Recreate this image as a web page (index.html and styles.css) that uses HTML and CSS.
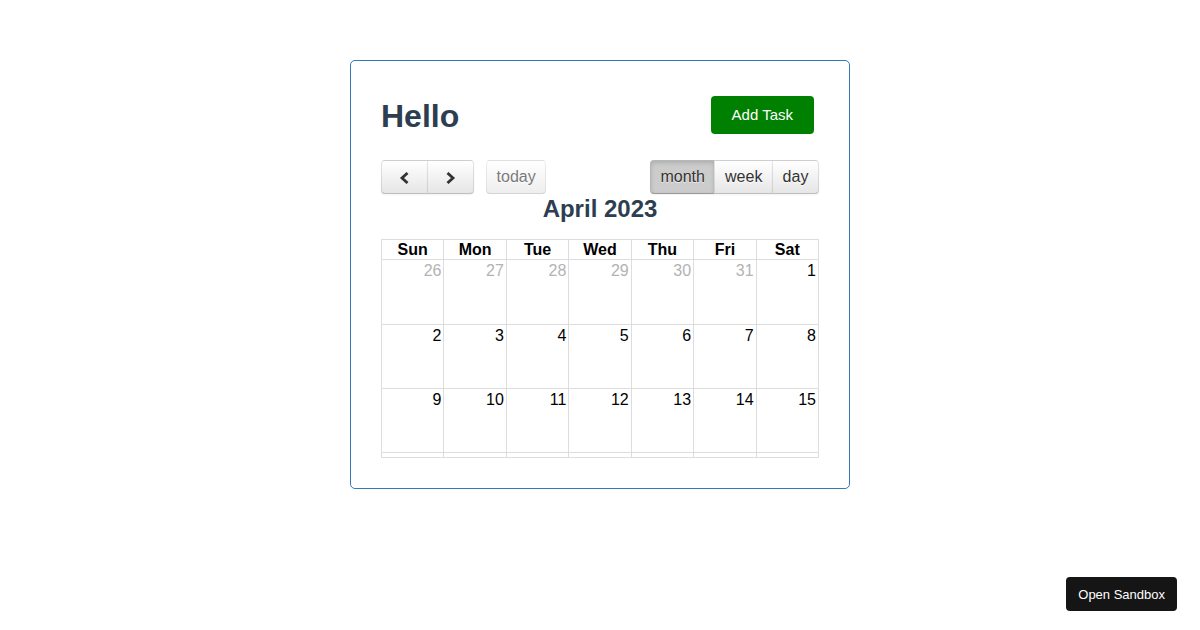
FILE: index.html
```html
<!DOCTYPE html>
<html lang="en">
  <head>
    <meta charset="UTF-8">
    <title>Hello</title>
    <link rel="stylesheet" href="styles.css">
  </head>
  <body>
    <div class="card">
      <div class="card-head">
        <h1>Hello</h1>
        <button class="add-btn">Add Task</button>
      </div>

      <div class="toolbar">
        <div class="tb-left">
          <div class="btn-group">
            <button class="fc-btn icon-btn first" aria-label="prev">
              <svg width="11" height="12" viewBox="0 0 11 12"><polyline points="8.5,1 3,6 8.5,11" fill="none" stroke="#333" stroke-width="2.8"/></svg>
            </button>
            <button class="fc-btn icon-btn last" aria-label="next">
              <svg width="11" height="12" viewBox="0 0 11 12"><polyline points="2.5,1 8,6 2.5,11" fill="none" stroke="#333" stroke-width="2.8"/></svg>
            </button>
          </div>
          <button class="fc-btn single disabled">today</button>
        </div>
        <div class="btn-group">
          <button class="fc-btn first active">month</button>
          <button class="fc-btn">week</button>
          <button class="fc-btn last">day</button>
        </div>
      </div>

      <h2 class="cal-title">April 2023</h2>

      <div class="cal-head">
        <div>Sun</div><div>Mon</div><div>Tue</div><div>Wed</div><div>Thu</div><div>Fri</div><div>Sat</div>
      </div>
      <div class="cal-body">
        <div class="day other">26</div><div class="day other">27</div><div class="day other">28</div><div class="day other">29</div><div class="day other">30</div><div class="day other">31</div><div class="day">1</div>
        <div class="day">2</div><div class="day">3</div><div class="day">4</div><div class="day">5</div><div class="day">6</div><div class="day">7</div><div class="day">8</div>
        <div class="day">9</div><div class="day">10</div><div class="day">11</div><div class="day">12</div><div class="day">13</div><div class="day">14</div><div class="day">15</div>
        <div class="day empty"></div><div class="day empty"></div><div class="day empty"></div><div class="day empty"></div><div class="day empty"></div><div class="day empty"></div><div class="day empty"></div>
      </div>
    </div>

    <button class="sandbox-btn">Open Sandbox</button>
  </body>
</html>
```

FILE: styles.css
```css
body {
  margin: 0;
  font-family: "Liberation Sans", Arial, sans-serif;
  color: #000;
  background: #fff;
}
.card {
  width: 438px;
  margin: 60px auto 0;
  padding: 30px;
  border: 1px solid #337ab7;
  border-radius: 5px;
}
.card-head {
  display: flex;
  justify-content: space-between;
  align-items: center;
  padding: 3px 5px 3px 0;
  margin-bottom: 22px;
}
.card-head h1 {
  margin: 0;
  padding-top: 4px;
  font-size: 32px;
  font-weight: bold;
  color: #2c3e50;
  line-height: 37px;
}
.add-btn {
  height: 38px;
  padding: 0 21px;
  border: 0;
  border-radius: 4px;
  background: #008000;
  color: #fff;
  font-family: inherit;
  font-size: 15px;
}
.toolbar {
  display: flex;
  justify-content: space-between;
  align-items: center;
}
.tb-left {
  display: flex;
  gap: 12px;
}
.btn-group {
  display: flex;
}
.fc-btn {
  height: 34px;
  padding: 0 9.6px;
  margin: 0;
  font-family: inherit;
  font-size: 16px;
  color: #333;
  background-color: #f5f5f5;
  background-image: linear-gradient(to bottom, #fff, #e6e6e6);
  border: 1px solid;
  border-color: rgba(0,0,0,.1) rgba(0,0,0,.1) rgba(0,0,0,.25);
  text-shadow: 0 1px 1px rgba(255,255,255,.75);
  box-shadow: inset 0 1px 0 rgba(255,255,255,.2), 0 1px 2px rgba(0,0,0,.05);
  border-radius: 0;
}
.btn-group .fc-btn + .fc-btn {
  margin-left: -1px;
}
.fc-btn.first {
  border-radius: 4px 0 0 4px;
}
.fc-btn.last {
  border-radius: 0 4px 4px 0;
}
.fc-btn.single {
  border-radius: 4px;
}
.icon-btn {
  width: 47px;
  display: flex;
  align-items: center;
  justify-content: center;
  padding-top: 1px;
}
.fc-btn.active {
  background-color: #ccc;
  background-image: none;
  box-shadow: inset 0 2px 4px rgba(0,0,0,.15), 0 1px 2px rgba(0,0,0,.05);
}
.fc-btn.disabled {
  opacity: .65;
  box-shadow: none;
}
.cal-title {
  margin: 1px 0 16px;
  text-align: center;
  font-size: 24px;
  line-height: 28px;
  font-weight: bold;
  color: #2c3e50;
}
.cal-head {
  display: grid;
  grid-template-columns: repeat(7, 1fr);
  gap: 1px;
  background: #ddd;
  border: 1px solid #ddd;
}
.cal-head div {
  background: #fff;
  text-align: center;
  font-weight: bold;
  font-size: 16px;
  line-height: 19px;
}
.cal-body {
  display: grid;
  grid-template-columns: repeat(7, 1fr);
  grid-template-rows: 64px 63px 63px 4px;
  gap: 1px;
  background: #ddd;
  border: 1px solid #ddd;
  border-top: 0;
}
.day {
  background: #fff;
  text-align: right;
  padding: 2px;
  font-size: 16px;
  line-height: 18px;
}
.day.empty {
  padding: 0;
}
.day.other {
  color: #b3b3b3;
}
.sandbox-btn {
  position: fixed;
  right: 23px;
  bottom: 19px;
  height: 34px;
  padding: 0 12px;
  border: 0;
  border-radius: 4px;
  background: #151515;
  color: #fff;
  font-family: "Liberation Sans", Arial, sans-serif;
  font-size: 13px;
}
```
